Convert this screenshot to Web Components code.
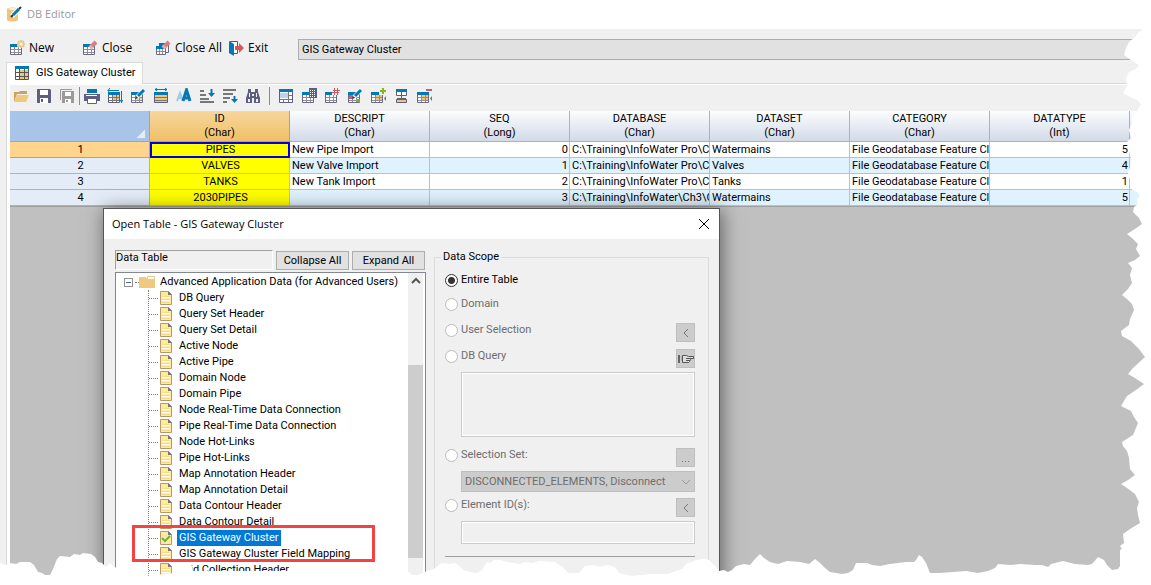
<!DOCTYPE html>
<html lang="en">
<head>
<meta charset="utf-8">
<meta name="viewport" content="width=device-width, initial-scale=1">
<title>DB Editor</title>
<style>
    body {
        margin: 0;
        background: white;
        color: black;
        font: 11px/16px Roboto, "Liberation Sans", sans-serif;
        --face: #f0f0f0;
        --line: #adadad;
        --system-font: "Open Sans", "Noto Sans", sans-serif;
    }
</style>
</head>
<body>
<db-editor>
    <tool-button slot="menu" icon="new">New</tool-button>
    <tool-button slot="menu" icon="close">Close</tool-button>
    <tool-button slot="menu" icon="close-all">Close All</tool-button>
    <tool-button slot="menu" icon="exit">Exit</tool-button>
    <icon-strip slot="tools"></icon-strip>
    <data-grid slot="grid"></data-grid>
    <open-dialog slot="window" heading="Open Table - GIS Gateway Cluster">
        <table-tree slot="left"></table-tree>
        <data-scope slot="right"></data-scope>
    </open-dialog>
</db-editor>

<script>
const sheet = (y = 4, tint = '#fff') => `
    <path fill="#fff" stroke="#6b6b80" d="M1.500 ${y}.5h11v${14 - y}h-11z"/>
    <path fill="${tint}" d="M5 ${y + 3}h7v${10 - y}H5z"/>
    <path fill="#0079b4" d="M1 ${y}h12v3H1z"/>
    <path stroke="#8c8c9a" d="M2 ${y + 5}.5h10M2 ${y + 8}.5h10M5.500 ${y + 3}v${11 - y}M9.500 ${y + 3}v${11 - y}"/>`;

const pencil = '<path stroke="#fff" stroke-width="4" d="M7 9l7-7"/><path stroke="#0079b4" stroke-width="3" d="M8 8l6-6"/><path fill="#333" d="M5 11l1-3 2 2z"/>';
const eraser = '<path stroke="#dc7b80" stroke-width="4" d="M9 7l5-5"/><path stroke="#eaa9ac" stroke-width="4" d="M8 8l2-2"/>';

const ICONS = {
    app: '<path fill="#efc57c" d="M1 3c2-2 9-2 11 0v11c-2 2-9 2-11 0z"/><path fill="#fff" d="M2 3c2-1 7-1 9 0-2 1-7 1-9 0z"/><path stroke="#fff" stroke-width="5" d="M6 10l8-8"/><path stroke="#0079b4" stroke-width="3" d="M7 9l6-6"/><path stroke="#333" stroke-width="2" d="M5 11l2-2M13 3l2-2"/>',
    new: sheet() + '<circle cx="12" cy="4" r="4" fill="#f0f0f0"/><path stroke="#e8c78a" stroke-width="2" d="M12 0v8M8 4h8M9 1l6 6M15 1L9 7"/><circle cx="12" cy="4" r="1.500" fill="#fff"/>',
    close: sheet() + eraser,
    'close-all': '<path fill="#fff" stroke="#6b6b80" d="M4.500 3.500h9v9h-9z"/><path fill="#0079b4" d="M4 3h9v3H4z"/><path fill="#fff" stroke="#6b6b80" d="M1.500 6.500h9v8h-9z"/><path fill="#0079b4" d="M1 6h10v3H1z"/><path stroke="#8c8c9a" d="M2 11.500h8M4.500 9v5M7.500 9v5"/>' + eraser,
    exit: '<path fill="#fff" stroke="#555" d="M2.500 1.500h7v12h-7z"/><path fill="#0079b4" d="M1 1l5 3v12l-5-3z"/><path fill="#d4595e" d="M7 6h4V3l5 5-5 5V10H7z"/>',
    tab: '<path fill="#fff" stroke="#555" d="M1.500 1.500h13v13h-13z"/><path fill="#efc57c" d="M6 5h8v9H6z"/><path fill="#0079b4" d="M1 1h14v3H1z"/><path stroke="#555" d="M2 7.500h12M2 11.500h12M5.500 4v10M10.500 4v10"/>',
    open: '<path fill="#caa35c" d="M1 4h5l1-1h7v3H4l-3 8z"/><path fill="#efc980" d="M4 7h12l-3 7H1z"/>',
    save: '<path fill="#5e5e80" d="M1 1h13l1 1v13H1z"/><path fill="#fff" d="M4 2h8v5H4zM4 10h8v5H4z"/><path fill="#5e5e80" d="M5 11h2v3H5z"/>',
    'save-all': '<path fill="none" stroke="#9a9a9a" d="M1.500 12V1.500H13"/><path fill="#9a9a9a" d="M3 3h12v12H3z"/><path fill="#fff" d="M6 4h6v4H6zM6 11h6v4H6z"/><path fill="#9a9a9a" d="M7 12h2v2H7z"/>',
    print: '<path fill="#5e5e80" d="M0 6h16v7H0z"/><path fill="#0079b4" d="M3 1h10v4H3z"/><path fill="#fff" stroke="#5e5e80" d="M3.500 10.500h9v5h-9z"/><path fill="#fff" d="M2 7h11v1H2z"/>',
    height: '<path stroke="#0079b4" d="M1 2.500h11M3 0L1 2.500 3 5M14.500 3v12M13 12l1.500 2 1.500-2"/><path fill="#fff" stroke="#5e5e80" d="M1.500 4.500h11v10h-11z"/><path fill="#efc57c" d="M6 7h6v5H6z"/><path fill="#0079b4" d="M1 4h12v3H1z"/><path stroke="#777" d="M2 9.500h10M2 12.500h10M5.500 7v7M9.500 7v7"/>',
    edit: sheet(4, '#f6d89d') + pencil,
    width: '<path stroke="#0079b4" d="M2 1.500h12M4 0L2 1.500 4 3M12 0l2 1.500L12 3"/><path fill="#efc57c" stroke="#5e5e80" d="M1.500 4.500h13v10h-13z"/><path fill="#0079b4" d="M1 4h14v3H1z"/><path stroke="#777" d="M2 9.500h12M2 12.500h12"/>',
    font: '<path fill="none" stroke="#9dc8ec" stroke-width="2" d="M1 13l3-8 3 8M2 10h4"/><path fill="none" stroke="#0079b4" stroke-width="3" d="M7 13l3.500-11L14 13M8 10h5"/>',
    ascend: '<path stroke="#777" stroke-width="2" d="M1 3h4M1 7h6M1 11h9M1 14h14"/><path stroke="#0079b4" stroke-width="2" d="M12.500 1v6"/><path fill="#0079b4" d="M9 5h7l-3.500 4z"/>',
    descend: '<path stroke="#777" stroke-width="2" d="M1 2h13M1 6h10M1 10h7M1 14h4"/><path stroke="#0079b4" stroke-width="2" d="M12.500 8v5"/><path fill="#0079b4" d="M9 11h7l-3.500 4z"/>',
    find: '<path fill="#5e5e80" d="M3 1h3v3h4V1h3v3l2 6v5H9v-5H7v5H1v-5l2-6z"/><path fill="#eee" d="M3 11h2v3H3zM11 11h2v3h-2zM4 5h1v4H4zM11 5h1v4h-1zM7 6h2v2H7z"/>',
    view: '<path fill="#fff" stroke="#5e5e80" d="M1.500 1.500h13v13h-13z"/><path fill="#0079b4" d="M1 1h14v3H1z"/><path fill="#b5d5f2" d="M2 5h8v5H2z"/><path stroke="#777" d="M10.500 4v10M2 11.500h12M10 7.500h4M5.500 11v3"/>',
    calc: sheet() + '<path fill="#5e5e80" d="M8 0h8v10H8z"/><path stroke="#fff" stroke-dasharray="1 1" d="M9 2.500h6M9 4.500h6M9 6.500h6M9 8.500h6"/>',
    number: sheet() + '<path fill="#f0f0f0" d="M8 0h8v7H8z"/><path stroke="#c45c66" d="M10.500 0v7M13.500 0v7M9 2.500h7M8 4.500h7"/>',
    paint: sheet() + '<path fill="#c45c86" d="M2 7h4v4H2z"/><path fill="#6cb33f" d="M9 11h4v3H9z"/>' + pencil,
    add: sheet(4, '#efc57c') + '<path fill="#f0f0f0" d="M9 0h7v7H9z"/><path stroke="#8ab71c" stroke-width="2" d="M13 0v6M10 3h6"/><path fill="#777" d="M16 8v5l-2-2.500z"/>',
    link: '<path fill="#fff" stroke="#5e5e80" d="M3.500 1.500h10v6h-10z"/><path fill="#0079b4" d="M3 1h11v3H3z"/><path stroke="#5e5e80" d="M8.500 4v7M4 10.500h9"/><path fill="#efc57c" stroke="#5e5e80" d="M3.500 11.500h10v3h-10z"/>',
    remove: sheet(4, '#efc57c') + '<path fill="#f0f0f0" d="M9 0h7v4H9z"/><path stroke="#c45c86" stroke-width="2" d="M10 2h6"/><path fill="#777" d="M16 8v5l-2-2.500z"/>',
    folder: '<path fill="#fff" stroke="#e8c78a" d="M8.500 2.500h7v5h-7z"/><path fill="#efc980" d="M0 3h7l1 2h8v9H0z"/>',
    page: '<path fill="#ffeaa0" stroke="#b99a63" d="M2.500 1.500h8l3 3v10h-11z"/><path fill="#777" d="M10 1l4 4h-4z"/><path stroke="#fff" d="M4 7.500h8M4 10.500h8"/><path stroke="#f7d987" d="M4 6.500h8M4 9.500h8M4 12.500h8"/>',
    checked: '<path fill="#ffeaa0" stroke="#b99a63" d="M2.500 1.500h8l3 3v10h-11z"/><path fill="#777" d="M10 1l4 4h-4z"/><path fill="none" stroke="#6cb33f" stroke-width="2" d="M4 8l3 3 5-5"/>',
    hand: '<path fill="#666" d="M0 4h2v8H0z"/><path fill="#5fd0d4" d="M3 5h1v5H3z"/><path fill="#ddd" stroke="#555" d="M4.500 4.500h4l2 1h5v2h-4l1 1-1 2-1 1h-6zM8 7.500h4M8 9.500h4"/>',
    cross: '<path stroke="#000" d="M3 3l10 10M13 3L3 13"/>',
    up: '<path fill="none" stroke="#555" stroke-width="2" d="M4 10l4-4 4 4"/>',
    less: '<path fill="none" stroke="#777" d="M10 4L6 8l4 4"/>',
    dots: '<path fill="#777" d="M4 11h1v1H4zM7 11h1v1H7zM10 11h1v1h-1z"/>'
};

class DbIcon extends HTMLElement {
    constructor() {
        super();
        this.attachShadow({ mode: 'open' });
    }

    connectedCallback() {
        this.shadowRoot.innerHTML = `
            <style>
                :host {
                    display: block;
                    flex: none;
                    width: 16px;
                    height: 16px;
                }

                svg {
                    display: block;
                }
            </style>
            <svg width="16" height="16" viewBox="0 0 16 16" fill="none" aria-hidden="true">${ICONS[this.getAttribute('name')]}</svg>
        `;
    }
}

class ToolButton extends HTMLElement {
    constructor() {
        super();
        this.attachShadow({ mode: 'open' });
        this.shadowRoot.innerHTML = `
            <style>
                :host {
                    display: block;
                    flex: none;
                    min-width: 73px;
                }

                button {
                    display: flex;
                    align-items: center;
                    gap: 4px;
                    padding: 0;
                    border: 0;
                    background: none;
                    color: inherit;
                    font: 12px/16px var(--system-font);
                    white-space: nowrap;
                }
            </style>
            <button type="button"><db-icon name="${this.getAttribute('icon')}"></db-icon><slot></slot></button>
        `;
    }
}

class IconStrip extends HTMLElement {
    constructor() {
        super();
        this.attachShadow({ mode: 'open' });
        const groups = [
            ['open', 'save', 'save-all'],
            ['print', 'height', 'edit', 'width', 'font', 'ascend', 'descend', 'find'],
            ['view', 'calc', 'number', 'paint', 'add', 'link', 'remove']
        ];
        this.shadowRoot.innerHTML = `
            <style>
                :host {
                    display: flex;
                    align-items: center;
                    height: 22px;
                    padding-bottom: 4px;
                    background: var(--face);
                }

                button {
                    width: 23px;
                    padding: 0 3px;
                    border: 0;
                    background: none;
                }

                i {
                    width: 1px;
                    height: 18px;
                    margin-right: 1px;
                    background: #8c8c8c;
                }

                i.wide {
                    margin: 0 5px 0 4px;
                }
            </style>
            ${groups.map((group, n) => (n ? `<i class="${n > 1 ? 'wide' : ''}"></i>` : '') +
                group.map(name => `<button type="button" aria-label="${name}"><db-icon name="${name}"></db-icon></button>`).join('')).join('')}
        `;
    }
}

class DataGrid extends HTMLElement {
    constructor() {
        super();
        this.attachShadow({ mode: 'open' });
        const columns = [['ID', 'Char'], ['DESCRIPT', 'Char'], ['SEQ', 'Long'], ['DATABASE', 'Char'], ['DATASET', 'Char'], ['CATEGORY', 'Char'], ['DATATYPE', 'Int']];
        const rows = [
            ['PIPES', 'New Pipe Import', 0, 'C:\\Training\\InfoWater Pro\\C', 'Watermains', 'File Geodatabase Feature Cla', 5],
            ['VALVES', 'New Valve Import', 1, 'C:\\Training\\InfoWater Pro\\C', 'Valves', 'File Geodatabase Feature Cla', 4],
            ['TANKS', 'New Tank Import', 2, 'C:\\Training\\InfoWater Pro\\C', 'Tanks', 'File Geodatabase Feature Cla', 1],
            ['2030PIPES', '', 3, 'C:\\Training\\InfoWater\\Ch3\\G', 'Watermains', 'File Geodatabase Feature Cla', 5]
        ];
        this.shadowRoot.innerHTML = `
            <style>
                :host {
                    display: block;
                }

                table {
                    table-layout: fixed;
                    width: 100%;
                    border-collapse: separate;
                    border-spacing: 0;
                    border-bottom: 1px solid #a0a0a0;
                    background: white;
                }

                col {
                    width: 140px;
                }

                col:last-child {
                    width: auto;
                }

                th, td {
                    box-sizing: border-box;
                    height: 16px;
                    padding: 1px 0 0 2px;
                    border: 0 solid #c0c0c0;
                    border-width: 0 1px 1px 0;
                    overflow: hidden;
                    white-space: nowrap;
                    font-weight: normal;
                    line-height: 14px;
                }

                thead th {
                    height: 31px;
                    padding: 1px 0 0;
                    border-color: #9db6d2;
                    background: linear-gradient(#fbfdfe, #d2dae8);
                    vertical-align: top;
                }

                thead td {
                    border-color: #f09040;
                    background: linear-gradient(135deg, transparent 50%, #e4ecf7 50%) right 4px bottom 3px / 8px 8px no-repeat #a9c4e9;
                }

                thead .current {
                    border-color: #f09040;
                    background: linear-gradient(#f8d69b, #efc067);
                }

                tbody th {
                    border-color: #9db6d2;
                    background: #e4ecf7;
                }

                tbody tr:nth-child(even) {
                    background: #dff2fe;
                }

                tbody tr:first-child th {
                    border-color: #f09040;
                    background: #ffd58d;
                }

                .id {
                    background: yellow;
                    text-align: center;
                }

                tbody tr:first-child .id {
                    outline: 2px solid #0000e0;
                    outline-offset: -2px;
                }

                .number {
                    padding-right: 1px;
                    text-align: right;
                }
            </style>
            <table>
                <colgroup>${'<col>'.repeat(9)}</colgroup>
                <thead>
                    <tr><td></td>${columns.map(([name, type], n) => `<th scope="col" class="${n ? '' : 'current'}">${name}<br>(${type})</th>`).join('')}<th></th></tr>
                </thead>
                <tbody>
                    ${rows.map((row, n) => `<tr><th scope="row">${n + 1}</th>${row.map((cell, c) => `<td class="${c === 0 ? 'id' : c === 2 || c === 6 ? 'number' : ''}">${cell}</td>`).join('')}<td></td></tr>`).join('')}
                </tbody>
            </table>
        `;
    }
}

class TableTree extends HTMLElement {
    constructor() {
        super();
        this.attachShadow({ mode: 'open' });
        const items = ['DB Query', 'Query Set Header', 'Query Set Detail', 'Active Node', 'Active Pipe', 'Domain Node', 'Domain Pipe',
            'Node Real-Time Data Connection', 'Pipe Real-Time Data Connection', 'Node Hot-Links', 'Pipe Hot-Links',
            'Map Annotation Header', 'Map Annotation Detail', 'Data Contour Header', 'Data Contour Detail',
            'GIS Gateway Cluster', 'GIS Gateway Cluster Field Mapping', 'Grid Collection Header'];
        this.shadowRoot.innerHTML = `
            <style>
                :host {
                    display: flex;
                    flex-direction: column;
                    min-height: 0;
                }

                header {
                    display: grid;
                    grid-template-columns: 1fr 73px 73px;
                    gap: 3px;
                    align-items: end;
                    padding-right: 1px;
                }

                header span {
                    height: 18px;
                    border: 1px solid #a0a0a0;
                    border-right-color: white;
                    border-bottom-color: white;
                    line-height: 14px;
                }

                header button {
                    height: 19px;
                    padding: 0;
                    border: 1px solid var(--line);
                    background: #e1e1e1;
                    color: inherit;
                    font: inherit;
                }

                .box {
                    display: flex;
                    flex: 1;
                    min-height: 0;
                    margin-top: 2px;
                    border: 1px solid #828790;
                    background: white;
                }

                ul {
                    flex: 1;
                    min-width: 0;
                    margin: 0;
                    padding: 1px 0 0;
                    overflow: hidden;
                    list-style: none;
                }

                ul ul {
                    margin-left: 32px;
                    padding: 0;
                    border-left: 1px dotted #808080;
                }

                .row {
                    display: flex;
                    align-items: center;
                    height: 16px;
                    white-space: nowrap;
                }

                .row::before {
                    content: "";
                    width: 9px;
                    border-top: 1px dotted #808080;
                }

                .root {
                    gap: 2px;
                    padding-left: 8px;
                }

                .root::before {
                    display: none;
                }

                .root button {
                    flex: none;
                    width: 9px;
                    height: 9px;
                    padding: 0;
                    border: 1px solid #919191;
                    background: linear-gradient(#4b63a7, #4b63a7) center / 5px 1px no-repeat white;
                }

                .root i {
                    flex: none;
                    width: 4px;
                    margin-right: -2px;
                    border-top: 1px dotted #808080;
                }

                .label {
                    margin-left: 3px;
                    padding: 0 2px;
                }

                .root .label {
                    margin-left: 1px;
                }

                .selected {
                    background: #0078d7;
                    color: white;
                }

                .scroll {
                    display: flex;
                    flex-direction: column;
                    width: 15px;
                    margin-right: 2px;
                    background: var(--face);
                }

                .scroll::after {
                    content: "";
                    flex: 0 0 193px;
                    margin-top: 76px;
                    background: #cdcdcd;
                }
            </style>
            <header>
                <span>Data Table</span>
                <button type="button">Collapse All</button>
                <button type="button">Expand All</button>
            </header>
            <div class="box">
                <ul role="tree">
                    <li>
                        <div class="row root"><button type="button" aria-label="Collapse"></button><i></i><db-icon name="folder"></db-icon><span class="label">Advanced Application Data (for Advanced Users)</span></div>
                        <ul role="group">
                            ${items.map(item => {
                                const selected = item === 'GIS Gateway Cluster';
                                return `<li class="row"><db-icon name="${selected ? 'checked' : 'page'}"></db-icon><span class="label ${selected ? 'selected' : ''}">${item}</span></li>`;
                            }).join('')}
                        </ul>
                    </li>
                </ul>
                <div class="scroll"><db-icon name="up"></db-icon></div>
            </div>
        `;
    }
}

class DataScope extends HTMLElement {
    constructor() {
        super();
        this.attachShadow({ mode: 'open' });
        const option = (id, text, icon, state = 'disabled') => `
            <div class="option">
                <label><input type="radio" name="scope" id="${id}" ${state}>${text}</label>
                ${icon ? `<button type="button" disabled aria-label="${text}"><db-icon name="${icon}"></db-icon></button>` : ''}
            </div>`;
        this.shadowRoot.innerHTML = `
            <style>
                :host {
                    display: block;
                    padding-top: 1px;
                }

                fieldset {
                    box-sizing: border-box;
                    height: 100%;
                    min-width: 0;
                    margin: 0;
                    padding: 7px 13px 0 10px;
                    border: 1px solid #dcdcdc;
                }

                legend {
                    margin-left: -4px;
                    padding: 0 2px;
                    line-height: 12px;
                }

                .option {
                    display: flex;
                    justify-content: space-between;
                    height: 26px;
                }

                .option:first-of-type {
                    height: 24px;
                }

                label {
                    display: flex;
                    align-items: center;
                    gap: 3px;
                    height: 20px;
                    color: #6d6d6d;
                }

                label:has(:checked) {
                    color: black;
                }

                input[type=radio] {
                    appearance: none;
                    box-sizing: border-box;
                    width: 13px;
                    height: 13px;
                    margin: 0;
                    border: 1px solid #bcbcbc;
                    border-radius: 50%;
                    background: white;
                }

                input[type=radio]:checked {
                    border-color: #333;
                    background: radial-gradient(#333 3px, white 4px);
                }

                button {
                    box-sizing: border-box;
                    width: 19px;
                    height: 19px;
                    margin-top: 3px;
                    padding: 0 1px;
                    border: 1px solid #bfbfbf;
                    background: #cccccc;
                }

                textarea, .field, select {
                    display: block;
                    box-sizing: border-box;
                    width: calc(100% - 16px);
                    margin: 0 0 0 16px;
                    border: 1px solid #cccccc;
                    outline: 1px solid white;
                    outline-offset: -2px;
                    background: var(--face);
                }

                textarea {
                    height: 65px;
                    margin-bottom: 8px;
                    resize: none;
                }

                select {
                    appearance: none;
                    height: 21px;
                    margin-bottom: 3px;
                    padding: 0 18px 0 3px;
                    border-color: #bfbfbf;
                    border-radius: 0;
                    outline: 0;
                    background: #cccccc;
                    color: #6d6d6d;
                    font: inherit;
                    opacity: 1;
                }

                .combo {
                    display: grid;
                }

                .combo > * {
                    grid-area: 1 / 1;
                }

                .combo svg {
                    justify-self: end;
                    margin: 8px 4px 0;
                }

                .field {
                    height: 23px;
                }

                hr {
                    margin: 12px 0 0;
                    border: 0;
                    border-top: 1px solid #a0a0a0;
                }
            </style>
            <fieldset>
                <legend>Data Scope</legend>
                ${option('entire', 'Entire Table', '', 'checked')}
                ${option('domain', 'Domain')}
                ${option('user', 'User Selection', 'less')}
                ${option('query', 'DB Query', 'hand')}
                <textarea aria-label="Query" disabled></textarea>
                ${option('set', 'Selection Set:', 'dots')}
                <div class="combo">
                    <select aria-label="Selection Set" disabled><option>DISCONNECTED_ELEMENTS, Disconnect</option></select>
                    <svg width="10" height="6" viewBox="0 0 10 6" fill="none" stroke="#999"><path d="M1 1l4 4 4-4"/></svg>
                </div>
                ${option('ids', 'Element ID(s):', 'less')}
                <input class="field" type="text" aria-label="Element IDs" disabled>
                <hr>
            </fieldset>
        `;
    }
}

class OpenDialog extends HTMLElement {
    constructor() {
        super();
        this.attachShadow({ mode: 'open' });
        this.shadowRoot.innerHTML = `
            <style>
                :host {
                    display: flex;
                    flex-direction: column;
                    box-sizing: border-box;
                    border: 1px solid #555;
                    border-bottom: 0;
                    background: var(--face);
                    box-shadow: 2px 2px 18px rgba(0, 0, 0, 0.5);
                }

                header {
                    display: flex;
                    align-items: center;
                    justify-content: space-between;
                    height: 30px;
                    padding: 0 7px 0 8px;
                    background: white;
                }

                h2 {
                    margin: 0;
                    font: 11px/16px var(--system-font);
                }

                header button {
                    padding: 0;
                    border: 0;
                    background: none;
                }

                main {
                    display: grid;
                    grid-template-columns: 311px 1fr;
                    grid-template-rows: 100%;
                    gap: 8px;
                    flex: 1;
                    min-height: 0;
                    padding: 11px 10px 0 11px;
                }
            </style>
            <header>
                <h2>${this.getAttribute('heading')}</h2>
                <button type="button" aria-label="Close"><db-icon name="cross"></db-icon></button>
            </header>
            <main><slot name="left"></slot><slot name="right"></slot></main>
        `;
    }
}

// white ragged paper along the right and bottom edges
class TornEdge extends HTMLElement {
    constructor() {
        super();
        this.attachShadow({ mode: 'open' });
        this.shadowRoot.innerHTML = `
            <style>
                :host {
                    position: absolute;
                    inset: 0;
                    pointer-events: none;
                }

                svg {
                    display: block;
                    width: 100%;
                    height: 100%;
                    fill: white;
                }
            </style>
            <svg viewBox="0 0 1151 585" preserveAspectRatio="none" aria-hidden="true">
                <path d="M1151 0V585H0V563L6 565L10 563L16 564L20 562L30 562L34 565L38 572L42 573L45 575L50 575L53 569L57 559L60 556L70 557L74 554L80 555L83 553L91 554L95 557L98 562L102 563L106 567L110 563L115 567L120 571L146 576L174 573L176 563L191 563L193 571L290 571L300 575L408 572L413 575L418 575L427 571L434 569L442 563L450 564L455 563L459 566L465 571L477 573L482 570L487 562L490 563L494 560L500 560L507 562L520 564L525 562L532 563L540 561L555 562L559 565L563 567L568 573L579 573L585 566L593 565L600 567L607 565L615 567L619 573L632 576L650 574L668 574L682 569L687 563L692 562L696 560L704 559L709 560L714 565L719 571L724 570L728 572L732 570L736 566L744 564L750 565L755 559L760 554L764 558L770 562L778 564L787 561L800 562L809 564L815 559L820 563L825 568L830 572L836 573L842 574L848 573L853 570L856 563L867 563L872 565L880 566L890 564L906 562L914 562L916 560L919 555L922 557L926 563L930 573L940 573L953 572L966 571L978 573L988 571L995 568L998 564L1010 565L1020 564L1035 565L1042 565L1048 567L1051 564L1063 561L1075 564L1088 565L1092 564L1098 557L1104 560L1107 565L1112 570L1118 569L1120 566V550L1122 549L1120 546L1124 543L1123 534L1130 529L1140 523L1138 515L1137 508L1139 502L1135 494L1127 488L1121 484L1128 480L1135 475L1130 469L1129 458L1127 451L1123 446L1122 442L1133 435L1138 423L1134 417L1131 411L1121 406L1127 396L1136 390L1144 384L1135 378L1128 374L1133 368L1145 357L1139 349L1131 341L1122 336L1121 331L1129 325L1130 319L1134 310L1132 304L1127 299L1122 295L1128 289L1132 283L1130 275L1132 268L1128 263L1135 260L1140 256L1136 249L1138 244L1132 238L1127 234L1135 229L1142 224L1139 218L1133 212L1134 207L1138 204L1137 199L1140 196L1137 192L1131 189L1130 180L1128 173L1130 167L1131 159L1129 151L1127 142L1131 138L1129 130L1132 123L1132 117L1137 111L1141 104L1137 100L1130 97L1123 93L1127 86L1126 78L1129 72L1136 69L1139 65L1131 60L1124 55L1126 48L1129 42L1135 37L1138 33L1142 30V0Z"/>
            </svg>
        `;
    }
}

class DbEditor extends HTMLElement {
    constructor() {
        super();
        this.attachShadow({ mode: 'open' });
        this.shadowRoot.innerHTML = `
            <style>
                :host {
                    position: relative;
                    display: flex;
                    flex-direction: column;
                    height: 100vh;
                    overflow: hidden;
                    background: var(--face);
                }

                header {
                    display: flex;
                    align-items: center;
                    gap: 5px;
                    height: 27px;
                    padding: 0 6px 2px;
                    background: white;
                    color: #999;
                }

                h1 {
                    margin: 0;
                    font: 11px/16px var(--system-font);
                }

                nav {
                    display: flex;
                    align-items: center;
                    height: 33px;
                    padding: 0 9px;
                }

                nav input {
                    flex: 1;
                    box-sizing: border-box;
                    height: 21px;
                    margin: 8px 0 0;
                    padding: 0 3px;
                    border: 1px solid var(--line);
                    background: #e1e1e1;
                    color: inherit;
                    font: inherit;
                }

                nav slot {
                    display: flex;
                    width: 289px;
                    margin-top: 4px;
                }

                .tabs {
                    display: flex;
                    padding-left: 6px;
                }

                .tabs button {
                    display: flex;
                    align-items: center;
                    gap: 6px;
                    height: 22px;
                    padding: 0 6px 2px 7px;
                    border: 1px solid #d9d9d9;
                    border-bottom: 0;
                    background: white;
                    color: inherit;
                    font: inherit;
                    white-space: nowrap;
                }

                .tabs::after {
                    content: "";
                    flex: 1;
                    border-bottom: 1px solid #d9d9d9;
                }

                .panel {
                    flex: 1;
                    min-height: 0;
                    margin-left: 6px;
                    padding: 1px 0 0 3px;
                    border-left: 1px solid #d9d9d9;
                    background: linear-gradient(#c0c0c0, #c0c0c0) 3px 1px no-repeat white;
                }

                ::slotted(open-dialog) {
                    position: absolute;
                    top: 208px;
                    bottom: 0;
                    left: 103px;
                    width: 617px;
                }

                .marker {
                    position: absolute;
                    top: 525px;
                    left: 132px;
                    width: 237px;
                    height: 31px;
                    border: 3px solid #f34444;
                }
            </style>
            <header><db-icon name="app"></db-icon><h1>DB Editor</h1></header>
            <nav><slot name="menu"></slot><input type="text" aria-label="Table" value="GIS Gateway Cluster" readonly></nav>
            <div class="tabs"><button type="button"><db-icon name="tab"></db-icon>GIS Gateway Cluster</button></div>
            <div class="panel"><slot name="tools"></slot><slot name="grid"></slot></div>
            <slot name="window"></slot>
            <torn-edge></torn-edge>
            <div class="marker"></div>
        `;
    }
}

customElements.define('db-icon', DbIcon);
customElements.define('tool-button', ToolButton);
customElements.define('icon-strip', IconStrip);
customElements.define('data-grid', DataGrid);
customElements.define('table-tree', TableTree);
customElements.define('data-scope', DataScope);
customElements.define('open-dialog', OpenDialog);
customElements.define('torn-edge', TornEdge);
customElements.define('db-editor', DbEditor);
</script>
</body>
</html>
